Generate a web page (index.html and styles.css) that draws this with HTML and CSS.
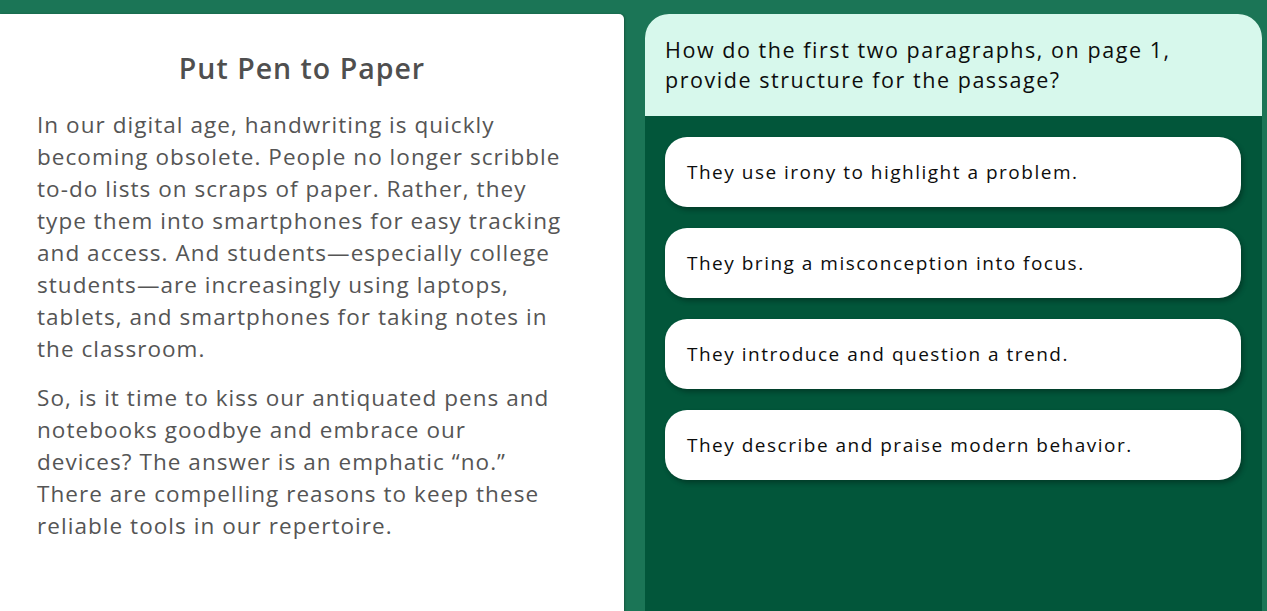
FILE: index.html
```html
<!DOCTYPE html>
<html lang="en">
<head>
<meta charset="utf-8">
<title>Put Pen to Paper</title>
<link rel="stylesheet" href="styles.css">
</head>
<body>
<main class="layout">
  <section class="passage">
    <h1 class="passage-title">Put Pen to Paper</h1>
    <p class="passage-text">In our digital age, handwriting is quickly<br>becoming obsolete. People no longer scribble<br>to-do lists on scraps of paper. Rather, they<br>type them into smartphones for easy tracking<br>and access. And students—especially college<br>students—are increasingly using laptops,<br>tablets, and smartphones for taking notes in<br>the classroom.</p>
    <p class="passage-text">So, is it time to kiss our antiquated pens and<br>notebooks goodbye and embrace our<br>devices? The answer is an emphatic “no.”<br>There are compelling reasons to keep these<br>reliable tools in our repertoire.</p>
  </section>
  <section class="quiz">
    <header class="question">How do the first two paragraphs, on page 1,<br>provide structure for the passage?</header>
    <div class="options">
      <button class="option">They use irony to highlight a problem.</button>
      <button class="option">They bring a misconception into focus.</button>
      <button class="option">They introduce and question a trend.</button>
      <button class="option">They describe and praise modern behavior.</button>
    </div>
  </section>
</main>
</body>
</html>
```
FILE: styles.css
```css
html, body {
  margin: 0;
  padding: 0;
  height: 100%;
}
body {
  background: #1b7556;
  font-family: "Open Sans", "DejaVu Sans", sans-serif;
  overflow: hidden;
}
.layout {
  display: flex;
  gap: 21px;
  padding-top: 14px;
  height: 597px;
}
.passage {
  width: 624px;
  box-sizing: border-box;
  background: #ffffff;
  border-top-right-radius: 5px;
  padding: 34px 20px 0 37px;
  box-shadow: 1px 0 2px rgba(0,0,0,0.25);
}
.passage-title {
  margin: 0 0 21px 0;
  text-align: center;
  font-size: 28.5px;
  line-height: 40px;
  font-weight: 600;
  color: #4f4f4f;
  letter-spacing: 1px;
  padding-right: 37px;
}
.passage-text {
  margin: 0 0 17px 0;
  font-size: 22.5px;
  line-height: 32px;
  color: #555555;
  white-space: nowrap;
  letter-spacing: 1.05px;
}
.quiz {
  width: 617px;
  background: #02563a;
  border-radius: 24px 24px 0 0;
  overflow: hidden;
  display: flex;
  flex-direction: column;
}
.question {
  background: #d7f8ec;
  padding: 21px 20px 21px 20px;
  font-size: 21.5px;
  line-height: 30px;
  font-weight: 500;
  color: #0d0d0d;
  letter-spacing: 1.55px;
  white-space: nowrap;
}
.options {
  display: flex;
  flex-direction: column;
  gap: 21px;
  padding: 21px 21px 0 20px;
}
.option {
  height: 70px;
  border: none;
  border-radius: 22px;
  background: #ffffff;
  text-align: left;
  padding: 0 22px;
  font-family: inherit;
  font-size: 19px;
  letter-spacing: 1.5px;
  color: #0d0d0d;
  box-shadow: 2px 3px 5px rgba(0,0,0,0.3);
  cursor: pointer;
}
```
